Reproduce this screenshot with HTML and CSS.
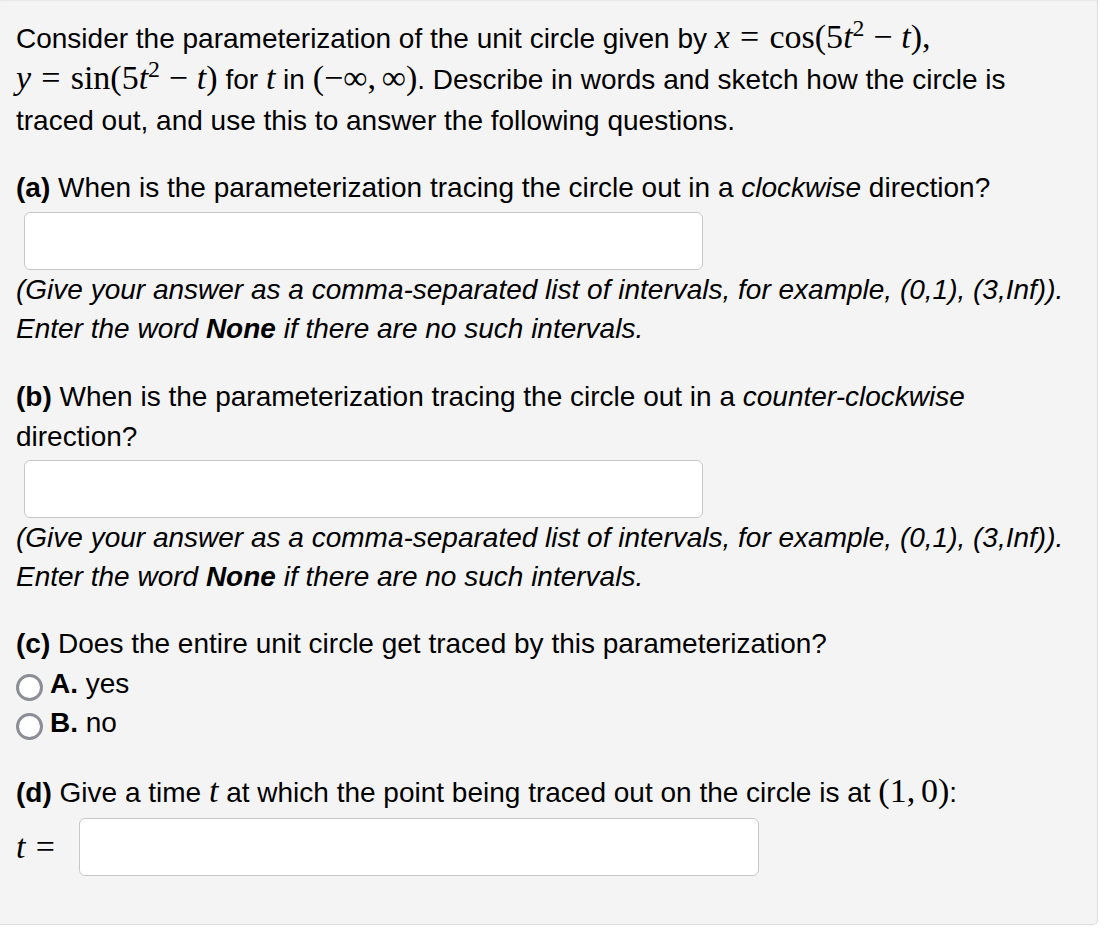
FILE: index.html
```html
<!DOCTYPE html>
<html>
<head>
<meta charset="utf-8">
<link rel="stylesheet" href="styles.css">
</head>
<body>
<div class="panel">
  <p class="intro">Consider the parameterization of the unit circle given by <span class="m"><i>x</i><span class="rel">=</span>cos(5<i>t</i><sup>2</sup><span class="bin">−</span><i>t</i>),</span><br>
  <span class="m"><i>y</i><span class="rel">=</span>sin(5<i>t</i><sup>2</sup><span class="bin">−</span><i>t</i>)</span> for <span class="m"><i>t</i></span> in <span class="m">(−∞,<span class="thin"></span>∞)</span>. Describe in words and sketch how the circle is<br>traced out, and use this to answer the following questions.</p>

  <p class="q qa"><b>(a)</b> When is the parameterization tracing the circle out in a <i>clockwise</i> direction?</p>
  <div class="answer"></div>
  <p class="note">(Give your answer as a comma-separated list of intervals, for example, (0,1), (3,Inf)).<br>Enter the word <b>None</b> if there are no such intervals.</p>

  <p class="q qb"><b>(b)</b> When is the parameterization tracing the circle out in a <i>counter-clockwise</i><br>direction?</p>
  <div class="answer"></div>
  <p class="note">(Give your answer as a comma-separated list of intervals, for example, (0,1), (3,Inf)).<br>Enter the word <b>None</b> if there are no such intervals.</p>

  <p class="q qc"><b>(c)</b> Does the entire unit circle get traced by this parameterization?</p>
  <div class="options">
    <label class="opt"><span class="radio"></span><b>A.</b>&nbsp;yes</label>
    <label class="opt"><span class="radio"></span><b>B.</b>&nbsp;no</label>
  </div>

  <p class="q qd"><b>(d)</b> Give a time <span class="m"><i>t</i></span> at which the point being traced out on the circle is at <span class="m">(1,<span class="thin"></span>0)</span>:</p>
  <div class="trow">
    <span class="m tl"><i>t</i><span class="rel">=</span></span>
    <div class="answer wide"></div>
  </div>
</div>
</body>
</html>
```

FILE: styles.css
```css
html, body {
  margin: 0;
  padding: 0;
  background: #ffffff;
}
body {
  font-family: "Liberation Sans", Arial, sans-serif;
  font-size: 28px;
  color: #000;
}
.panel {
  width: 1081px;
  background: #f4f4f4;
  border-right: 1px solid #dcdcdc;
  border-bottom: 1px solid #dcdcdc;
  border-bottom-right-radius: 5px;
  padding: 18px 0 48px 16px;
  box-shadow: inset 0 2px 2px -1px #e6e6e6;
}
p { margin: 0; }
.intro { line-height: 41px; }
.m {
  font-family: "Liberation Serif", "Times New Roman", serif;
  font-size: 34px;
  line-height: 1;
  white-space: nowrap;
}
.m i { font-style: italic; }
.m sup {
  font-size: 0.7em;
  line-height: 0;
  vertical-align: 0.5em;
}
.rel { margin: 0 0.3em; }
.bin { margin: 0 0.26em; }
.thin { display: inline-block; width: 0.17em; }
.q { line-height: 40px; }
.qa { margin-top: 27px; }
.qb { margin-top: 29px; }
.qc { margin-top: 28px; }
.qd { margin-top: 31px; }
.answer {
  width: 677px;
  height: 56px;
  margin: 4px 0 0 8px;
  background: #fff;
  border: 1px solid #c8c8c8;
  border-radius: 6px;
}
.qb + .answer { margin-top: 3px; }
.note {
  font-style: italic;
  line-height: 39px;
}
.options { display: flex; flex-direction: column; }
.opt {
  display: flex;
  align-items: center;
  height: 39px;
}
.radio {
  width: 21px;
  height: 21px;
  border: 3px solid #8d8d96;
  border-radius: 50%;
  background: #fff;
  margin-right: 7px;
  position: relative;
  top: 4px;
}
.trow {
  display: flex;
  align-items: center;
  margin-top: 5px;
}
.tl { margin-right: 14px; }
.trow .answer.wide {
  width: 678px;
  margin: 0;
}
```
